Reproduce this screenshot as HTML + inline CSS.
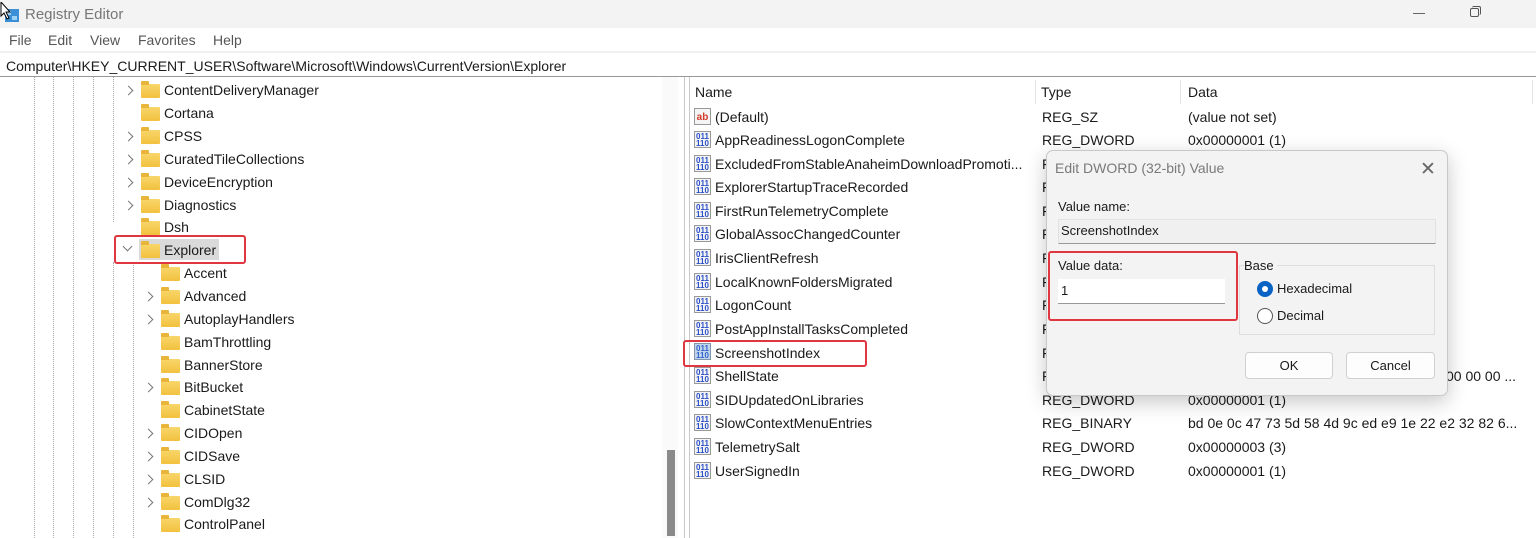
<!DOCTYPE html>
<html><head><meta charset="utf-8"><style>
*{margin:0;padding:0;box-sizing:border-box}
body{width:1536px;height:538px;overflow:hidden;background:#fff;font-family:"Liberation Sans",sans-serif;font-size:14px;color:#1a1a1a;position:relative}
.a{position:absolute;white-space:nowrap}
.f{position:absolute;width:19px;height:14px;background:linear-gradient(#f8d66a,#f2c13e);border-radius:1px}
.f:before{content:"";position:absolute;left:0;top:-3px;width:8px;height:4px;background:#e8b53a;border-radius:1px 1px 0 0}
.ch{position:absolute;width:7px;height:7px;border-right:1.3px solid #777;border-bottom:1.3px solid #777;transform:rotate(-45deg)}
.vl{position:absolute;top:77px;height:461px;border-left:1px dotted #a8a8a8}
.ri{position:absolute;width:17px;height:17px}
.red{position:absolute;border:2.5px solid #e0363f;border-radius:3px}
</style></head><body>
<!-- title bar -->
<div class="a" style="left:0;top:0;width:1536px;height:28px;background:#f3f3f3"></div>
<svg class="a" style="left:0;top:2px" width="22" height="22"><rect x="5" y="7" width="14" height="13" fill="#3b8fd6"/><rect x="7" y="9" width="4" height="4" fill="#9cd0f5"/><rect x="12" y="14" width="5" height="4" fill="#9cd0f5"/><path d="M1 0 L1 14 L4 11 L7 17 L9 16 L6 10 L10 10 Z" fill="#fff" stroke="#000" stroke-width="1"/></svg>
<div class="a" style="left:25px;top:6px;font-size:15px;color:#777">Registry Editor</div>
<div class="a" style="left:1413px;top:13px;width:12px;border-top:1px solid #666"></div>
<div class="a" style="left:1470px;top:8px;width:9px;height:9px;border:1px solid #555;border-radius:2px"></div>
<div class="a" style="left:1472px;top:6px;width:9px;height:9px;border-top:1px solid #555;border-right:1px solid #555;border-radius:2px"></div>
<!-- menu -->
<div class="a" style="left:9px;top:32px;color:#555">File</div>
<div class="a" style="left:48px;top:32px;color:#555">Edit</div>
<div class="a" style="left:90px;top:32px;color:#555">View</div>
<div class="a" style="left:138px;top:32px;color:#555">Favorites</div>
<div class="a" style="left:213px;top:32px;color:#555">Help</div>
<div class="a" style="left:0;top:51px;width:1536px;height:2px;background:#f0f0f0"></div>
<div class="a" style="left:6px;top:58px">Computer\HKEY_CURRENT_USER\Software\Microsoft\Windows\CurrentVersion\Explorer</div>
<div class="a" style="left:0;top:76px;width:1536px;height:1px;background:#999"></div>
<!-- left tree -->
<div class="vl" style="left:34px"></div><div class="vl" style="left:53px"></div><div class="vl" style="left:73px"></div><div class="vl" style="left:93px"></div><div class="vl" style="left:113px;top:77px;height:145px"></div><div class="vl" style="left:133px;top:262px;height:276px"></div>
<div class="vl" style="left:113px;top:262px;height:276px"></div>
<div class="a" style="left:662px;top:77px;width:16px;height:461px;background:#fafafa"></div>
<div class="a" style="left:667px;top:450px;width:8px;height:86px;background:#8a8a8a"></div>
<div class="a" style="left:684px;top:77px;width:1px;height:461px;background:#c8c8c8"></div>
<div class="a" style="left:689px;top:77px;width:1px;height:461px;background:#c8c8c8"></div>

<div class="ch" style="left:125px;top:87px"></div><div class="f" style="left:141px;top:84px"></div><div class="a" style="left:164px;top:82px">ContentDeliveryManager</div>
<div class="f" style="left:141px;top:107px"></div><div class="a" style="left:164px;top:105px">Cortana</div>
<div class="ch" style="left:125px;top:133px"></div><div class="f" style="left:141px;top:130px"></div><div class="a" style="left:164px;top:128px">CPSS</div>
<div class="ch" style="left:125px;top:156px"></div><div class="f" style="left:141px;top:153px"></div><div class="a" style="left:164px;top:151px">CuratedTileCollections</div>
<div class="ch" style="left:125px;top:179px"></div><div class="f" style="left:141px;top:176px"></div><div class="a" style="left:164px;top:174px">DeviceEncryption</div>
<div class="ch" style="left:125px;top:202px"></div><div class="f" style="left:141px;top:199px"></div><div class="a" style="left:164px;top:197px">Diagnostics</div>
<div class="f" style="left:141px;top:221px"></div><div class="a" style="left:164px;top:219px">Dsh</div>
<div class="a" style="left:139px;top:239px;width:80px;height:21px;background:#dadada"></div>
<div class="ch" style="left:124px;top:243px;transform:rotate(45deg)"></div><div class="f" style="left:141px;top:244px"></div><div class="a" style="left:164px;top:242px">Explorer</div>
<div class="red" style="left:114px;top:235px;width:132px;height:29px"></div>
<div class="f" style="left:161px;top:267px"></div><div class="a" style="left:184px;top:265px">Accent</div>
<div class="ch" style="left:145px;top:293px"></div><div class="f" style="left:161px;top:290px"></div><div class="a" style="left:184px;top:288px">Advanced</div>
<div class="ch" style="left:145px;top:316px"></div><div class="f" style="left:161px;top:313px"></div><div class="a" style="left:184px;top:311px">AutoplayHandlers</div>
<div class="f" style="left:161px;top:336px"></div><div class="a" style="left:184px;top:334px">BamThrottling</div>
<div class="f" style="left:161px;top:359px"></div><div class="a" style="left:184px;top:357px">BannerStore</div>
<div class="ch" style="left:145px;top:384px"></div><div class="f" style="left:161px;top:381px"></div><div class="a" style="left:184px;top:379px">BitBucket</div>
<div class="f" style="left:161px;top:404px"></div><div class="a" style="left:184px;top:402px">CabinetState</div>
<div class="ch" style="left:145px;top:430px"></div><div class="f" style="left:161px;top:427px"></div><div class="a" style="left:184px;top:425px">CIDOpen</div>
<div class="ch" style="left:145px;top:453px"></div><div class="f" style="left:161px;top:450px"></div><div class="a" style="left:184px;top:448px">CIDSave</div>
<div class="ch" style="left:145px;top:476px"></div><div class="f" style="left:161px;top:473px"></div><div class="a" style="left:184px;top:471px">CLSID</div>
<div class="ch" style="left:145px;top:499px"></div><div class="f" style="left:161px;top:496px"></div><div class="a" style="left:184px;top:494px">ComDlg32</div>
<div class="f" style="left:161px;top:518px"></div><div class="a" style="left:184px;top:516px">ControlPanel</div>

<!-- right header -->
<div class="a" style="left:695px;top:84px">Name</div>
<div class="a" style="left:1041px;top:84px">Type</div>
<div class="a" style="left:1188px;top:84px">Data</div>
<div class="a" style="left:1035px;top:80px;width:1px;height:24px;background:#e5e5e5"></div>
<div class="a" style="left:1180px;top:80px;width:1px;height:24px;background:#e5e5e5"></div>
<div class="a" style="left:1532px;top:80px;width:1px;height:24px;background:#e5e5e5"></div>

<svg width="0" height="0" style="position:absolute"><defs>
<g id="d"><rect x="0.5" y="0.5" width="16" height="16" fill="#f4f4f4" stroke="#999"/><text x="8.5" y="8" font-size="8" font-family="Liberation Sans" font-weight="bold" fill="#2a4fc8" text-anchor="middle">011</text><text x="8.5" y="15" font-size="8" font-family="Liberation Sans" font-weight="bold" fill="#2a4fc8" text-anchor="middle">110</text></g>
</defs></svg>

<svg class="ri" style="left:694px;top:108px"><rect x="0.5" y="0.5" width="16" height="16" fill="#f4f4f4" stroke="#999"/><text x="8.5" y="12" font-size="10" font-family="Liberation Sans" font-weight="bold" fill="#d23b2a" text-anchor="middle">ab</text></svg>
<div class="a" style="left:715px;top:109px">(Default)</div><div class="a" style="left:1042px;top:109px">REG_SZ</div><div class="a" style="left:1188px;top:109px">(value not set)</div>
<svg class="ri" style="left:694px;top:131px"><use href="#d"/></svg><div class="a" style="left:715px;top:132px">AppReadinessLogonComplete</div><div class="a" style="left:1042px;top:132px">REG_DWORD</div><div class="a" style="left:1188px;top:132px">0x00000001 (1)</div>
<svg class="ri" style="left:694px;top:155px"><use href="#d"/></svg><div class="a" style="left:715px;top:156px">ExcludedFromStableAnaheimDownloadPromoti...</div><div class="a" style="left:1042px;top:156px">F</div>
<svg class="ri" style="left:694px;top:178px"><use href="#d"/></svg><div class="a" style="left:715px;top:179px">ExplorerStartupTraceRecorded</div><div class="a" style="left:1042px;top:179px">F</div>
<svg class="ri" style="left:694px;top:202px"><use href="#d"/></svg><div class="a" style="left:715px;top:203px">FirstRunTelemetryComplete</div><div class="a" style="left:1042px;top:203px">F</div>
<svg class="ri" style="left:694px;top:225px"><use href="#d"/></svg><div class="a" style="left:715px;top:226px">GlobalAssocChangedCounter</div><div class="a" style="left:1042px;top:226px">F</div>
<svg class="ri" style="left:694px;top:249px"><use href="#d"/></svg><div class="a" style="left:715px;top:250px">IrisClientRefresh</div><div class="a" style="left:1042px;top:250px">F</div>
<svg class="ri" style="left:694px;top:273px"><use href="#d"/></svg><div class="a" style="left:715px;top:274px">LocalKnownFoldersMigrated</div><div class="a" style="left:1042px;top:274px">F</div>
<svg class="ri" style="left:694px;top:296px"><use href="#d"/></svg><div class="a" style="left:715px;top:297px">LogonCount</div><div class="a" style="left:1042px;top:297px">F</div>
<svg class="ri" style="left:694px;top:320px"><use href="#d"/></svg><div class="a" style="left:715px;top:321px">PostAppInstallTasksCompleted</div><div class="a" style="left:1042px;top:321px">F</div>
<div class="a" style="left:694px;top:343px;width:17px;height:17px;background:#4a90d9"></div>
<svg class="ri" style="left:694px;top:343px;opacity:.7"><use href="#d"/></svg><div class="a" style="left:715px;top:345px">ScreenshotIndex</div><div class="a" style="left:1042px;top:345px">F</div>
<div class="red" style="left:683px;top:340px;width:184px;height:27px"></div>
<svg class="ri" style="left:694px;top:367px"><use href="#d"/></svg><div class="a" style="left:715px;top:368px">ShellState</div><div class="a" style="left:1042px;top:368px">F</div><div class="a" style="left:1446px;top:368px">00 00 00 ...</div>
<svg class="ri" style="left:694px;top:391px"><use href="#d"/></svg><div class="a" style="left:715px;top:392px">SIDUpdatedOnLibraries</div><div class="a" style="left:1042px;top:392px">REG_DWORD</div><div class="a" style="left:1188px;top:392px">0x00000001 (1)</div>
<svg class="ri" style="left:694px;top:414px"><use href="#d"/></svg><div class="a" style="left:715px;top:415px">SlowContextMenuEntries</div><div class="a" style="left:1042px;top:415px">REG_BINARY</div><div class="a" style="left:1188px;top:415px">bd 0e 0c 47 73 5d 58 4d 9c ed e9 1e 22 e2 32 82 6...</div>
<svg class="ri" style="left:694px;top:438px"><use href="#d"/></svg><div class="a" style="left:715px;top:439px">TelemetrySalt</div><div class="a" style="left:1042px;top:439px">REG_DWORD</div><div class="a" style="left:1188px;top:439px">0x00000003 (3)</div>
<svg class="ri" style="left:694px;top:462px"><use href="#d"/></svg><div class="a" style="left:715px;top:463px">UserSignedIn</div><div class="a" style="left:1042px;top:463px">REG_DWORD</div><div class="a" style="left:1188px;top:463px">0x00000001 (1)</div>

<!-- dialog -->
<div class="a" style="left:1046px;top:150px;width:402px;height:246px;background:#f3f3f3;border:1px solid #c8c8c8;border-radius:7px;box-shadow:0 6px 20px rgba(0,0,0,.22)"></div>
<div class="a" style="left:1055px;top:160px;color:#7a7a7a">Edit DWORD (32-bit) Value</div>
<div class="a" style="left:1420px;top:158px;font-size:19px;color:#666">✕</div>
<div class="a" style="left:1058px;top:199px;font-size:13px">Value name:</div>
<div class="a" style="left:1058px;top:219px;width:378px;height:25px;background:#f0f0f0;border:1px solid #e2e2e2;border-bottom:1px solid #999"></div>
<div class="a" style="left:1061px;top:223px;font-size:13px">ScreenshotIndex</div>
<div class="a" style="left:1058px;top:258px;font-size:13px">Value data:</div>
<div class="a" style="left:1058px;top:279px;width:167px;height:25px;background:#fff;border-bottom:1px solid #999"></div>
<div class="a" style="left:1061px;top:283px;font-size:13px">1</div>
<div class="red" style="left:1048px;top:251px;width:190px;height:70px"></div>
<div class="a" style="left:1239px;top:265px;width:196px;height:70px;border:1px solid #ddd"></div>
<div class="a" style="left:1244px;top:258px;font-size:13px;background:#f3f3f3;padding-right:3px">Base</div>
<div class="a" style="left:1257px;top:281px;width:16px;height:16px;border-radius:50%;background:#0a62c4"></div>
<div class="a" style="left:1262px;top:286px;width:6px;height:6px;border-radius:50%;background:#fff"></div>
<div class="a" style="left:1277px;top:281px;font-size:13px">Hexadecimal</div>
<div class="a" style="left:1257px;top:308px;width:16px;height:16px;border-radius:50%;border:1px solid #555;background:#fff"></div>
<div class="a" style="left:1277px;top:308px;font-size:13px">Decimal</div>
<div class="a" style="left:1245px;top:352px;width:88px;height:27px;background:#fdfdfd;border:1px solid #d0d0d0;border-radius:4px;text-align:center;line-height:25px;font-size:13px">OK</div>
<div class="a" style="left:1346px;top:352px;width:89px;height:27px;background:#fdfdfd;border:1px solid #d0d0d0;border-radius:4px;text-align:center;line-height:25px;font-size:13px">Cancel</div>
</body></html>
